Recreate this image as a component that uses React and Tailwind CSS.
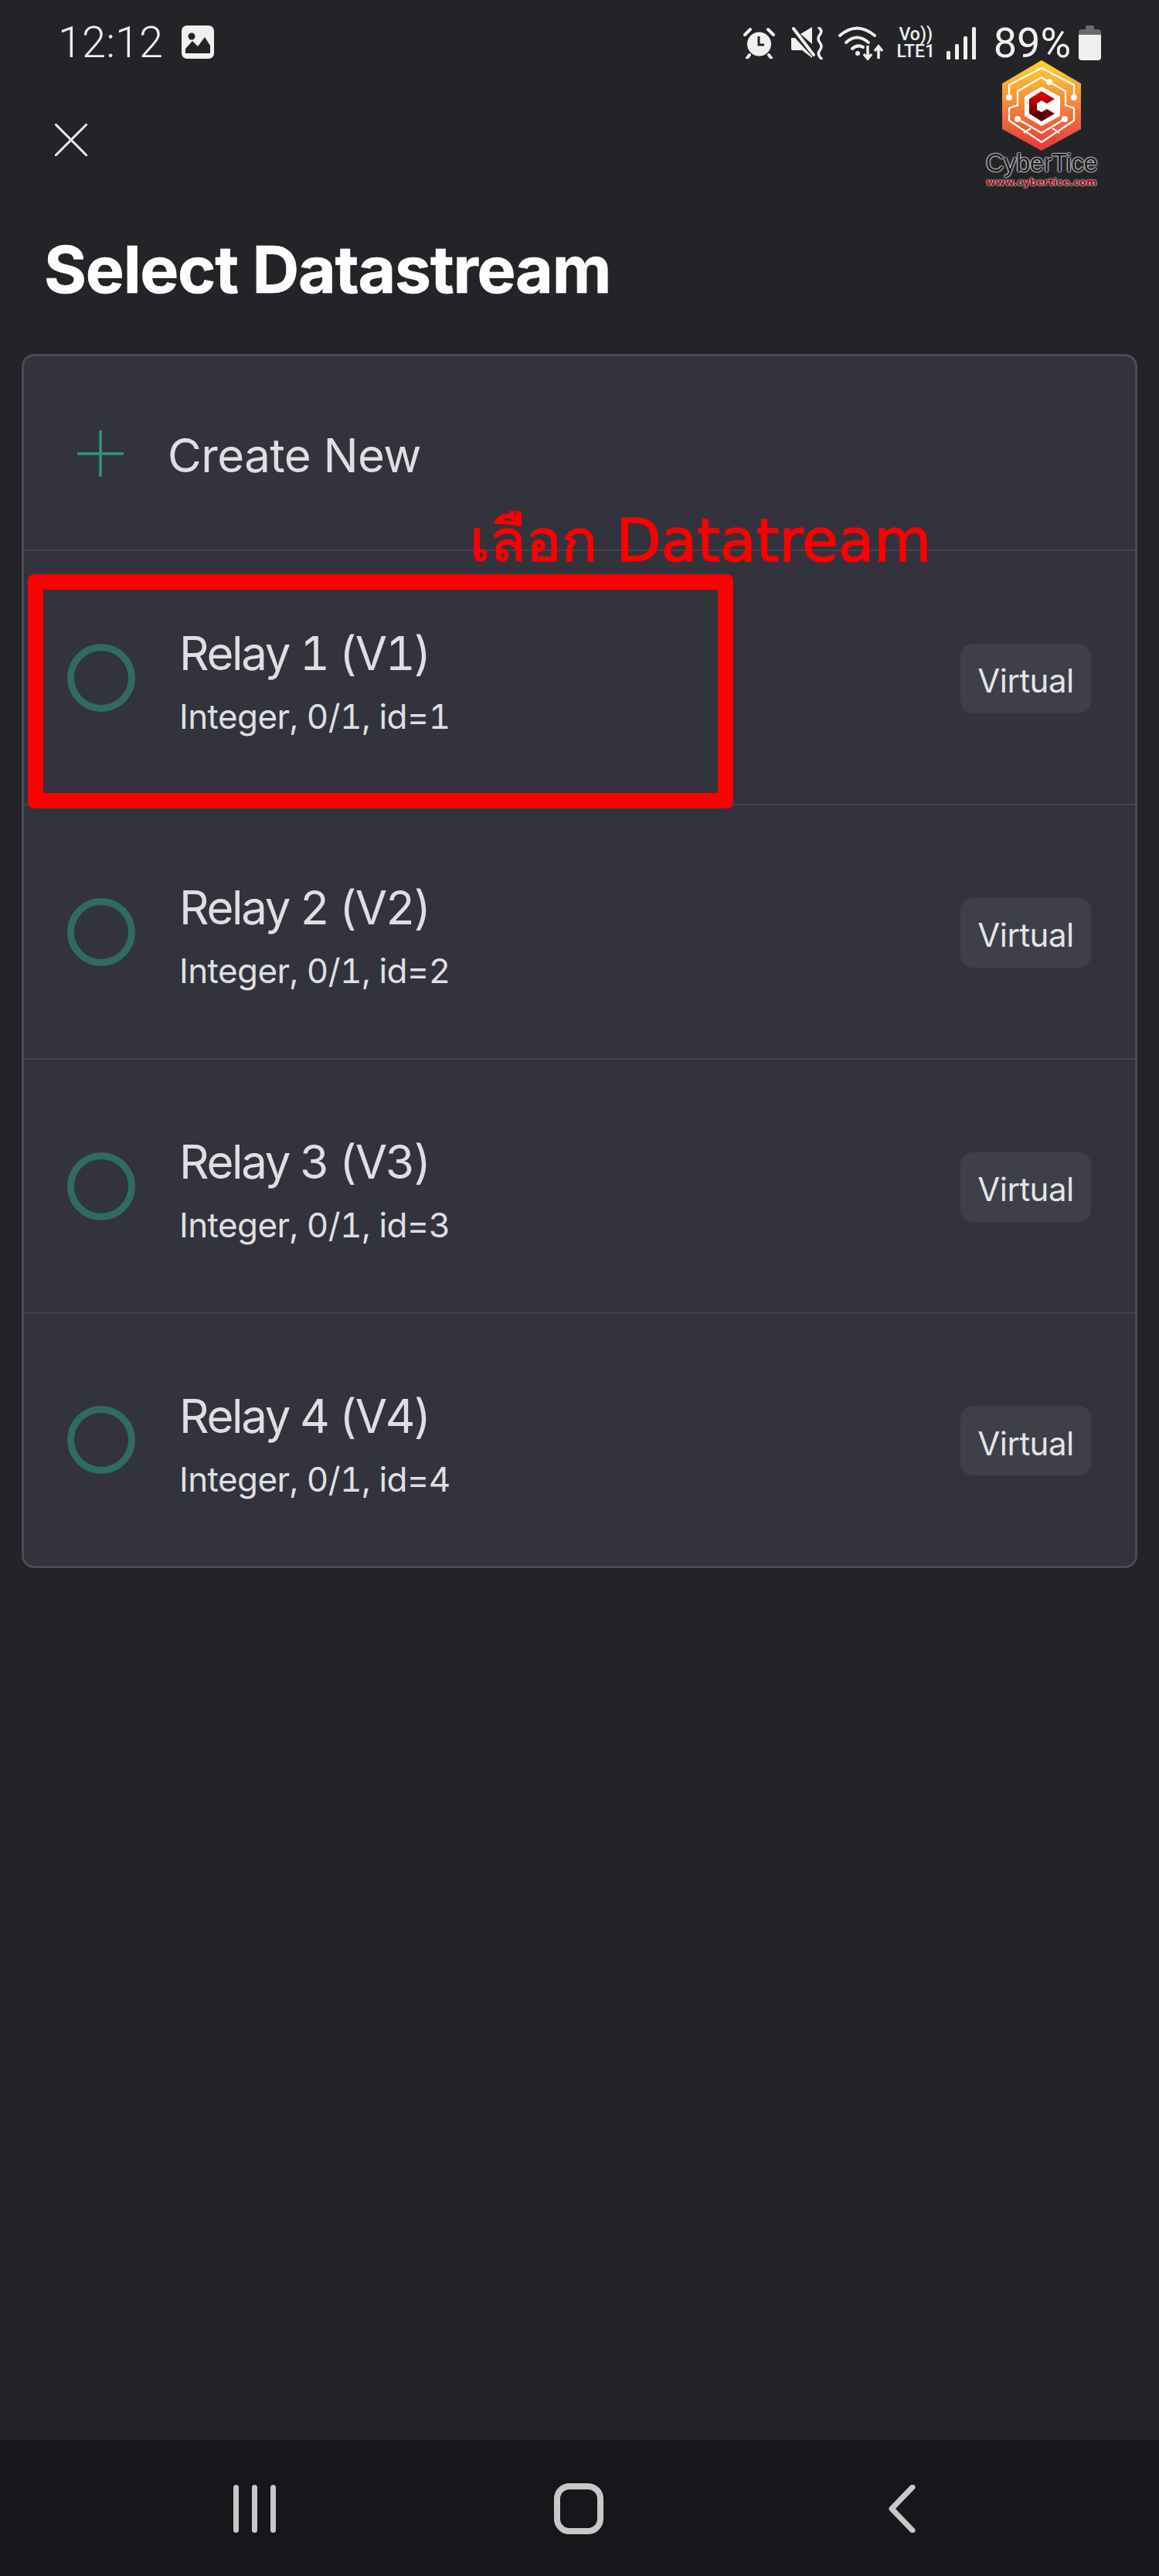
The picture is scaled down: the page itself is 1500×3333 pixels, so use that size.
const FONT = "font-['Inter','Liberation_Sans',sans-serif]";
const STREAMS = [
  { id: 1, name: "Relay 1 (V1)" },
  { id: 2, name: "Relay 2 (V2)" },
  { id: 3, name: "Relay 3 (V3)" },
  { id: 4, name: "Relay 4 (V4)" },
];

function Alarm() {
  return (
    <svg width="41" height="41" viewBox="0 0 41 41" className="shrink-0">
      <circle cx="20.5" cy="22" r="15.5" fill="#f0f0ee" />
      <path d="M2 10 L9 3 M39 10 L32 3 M8 36 L5 40 M33 36 L36 40" stroke="#f0f0ee" strokeWidth="4" strokeLinecap="round" />
      <path d="M20 12 V23 H27" stroke="#232428" strokeWidth="3" fill="none" />
    </svg>
  );
}

function Mute() {
  return (
    <svg width="43" height="42" viewBox="0 0 43 42" className="shrink-0">
      <path d="M0 14 H5 L27 38 V40 L14 30 H2 Q0 30 0 28 Z M12 9 L27 0 V22 Z" fill="#f0f0ee" />
      <path d="M3 2 L29 36" stroke="#f0f0ee" strokeWidth="4" strokeLinecap="round" />
      <path d="M36 1 Q41 5 37 10 Q33 15 37 20 Q41 25 37 30 Q33 35 39 41" stroke="#f0f0ee" strokeWidth="3.5" fill="none" strokeLinecap="round" />
    </svg>
  );
}

function Wifi() {
  return (
    <svg width="59" height="45" viewBox="0 0 59 45" className="shrink-0">
      <g stroke="#f0f0ee" strokeWidth="4" fill="none" strokeLinecap="round">
        <path d="M2 13 Q24 -6 47 13" />
        <path d="M10 22 Q24 9 39 22" />
        <path d="M18 30 Q25 24 32 28" />
      </g>
      <circle cx="25" cy="36" r="3" fill="#f0f0ee" />
      <path d="M38 26 V42 M33 37 L38 43 L43 37 M52 43 V27 M47 33 L52 27 L57 33" stroke="#f0f0ee" strokeWidth="3.5" fill="none" />
    </svg>
  );
}

function Signal() {
  return (
    <svg width="39" height="42" viewBox="0 0 39 42" className="shrink-0">
      <rect x="0" y="31" width="5" height="11" rx="1.5" fill="#f0f0ee" />
      <rect x="11" y="22" width="5" height="20" rx="1.5" fill="#f0f0ee" />
      <rect x="22" y="12" width="5" height="30" rx="1.5" fill="#f0f0ee" />
      <rect x="33" y="0" width="5" height="42" rx="1.5" fill="#f0f0ee" />
    </svg>
  );
}

function Battery() {
  return (
    <svg width="29" height="45" viewBox="0 0 29 45" className="shrink-0">
      <path d="M9 2 Q9 0 11 0 H18 Q20 0 20 2 V5 H25 Q29 5 29 9 V12 H0 V9 Q0 5 4 5 H9 Z" fill="#6a6b6f" />
      <path d="M0 12 H29 V41 Q29 45 25 45 H4 Q0 45 0 41 Z" fill="#f0f0ee" />
    </svg>
  );
}

function Logo() {
  return (
    <div className="absolute left-[1272px] top-[78px] w-[152px] flex flex-col items-center">
      <svg width="102" height="117" viewBox="0 0 102 117">
        <defs>
          <linearGradient id="hexFill" x1="0" y1="0" x2="0" y2="1">
            <stop offset="0" stopColor="#ffd633" />
            <stop offset="1" stopColor="#e8343c" />
          </linearGradient>
          <linearGradient id="cFill" x1="0" y1="0" x2="0" y2="1">
            <stop offset="0" stopColor="#f00000" />
            <stop offset="1" stopColor="#3a0000" />
          </linearGradient>
        </defs>
        <path d="M51 0 L102 30 V89 L51 117 L0 89 V30 Z" fill="url(#hexFill)" />
        <g stroke="#fff" strokeWidth="2.2" fill="none">
          <path d="M9 48 V32 L51 10 L93 32 V48" />
          <path d="M61 29 L51 22 L20 40 V58 L9 62 V78 L51 106 L93 78 V62 L82 58 V40 L61 28" />
          <path d="M20 76 L51 94 L81 76" />
          <path d="M37 88 L28 94 M65 88 L74 94" />
        </g>
        <circle cx="9" cy="48" r="4" fill="#fff" />
        <circle cx="93" cy="48" r="4" fill="#fff" />
        <circle cx="61" cy="28" r="4" fill="#fff" />
        <circle cx="20" cy="76" r="4" fill="#fff" />
        <circle cx="81" cy="76" r="4" fill="#fff" />
        <path d="M51 34 L75 47 V72 L51 85 L29 72 V47 Z" fill="#fff" />
        <path d="M51 40 L68 50 L58 56 L51 52 L45 56 V64 L51 67 L58 63 L68 69 L51 79 L35 69 V50 Z" fill="url(#cFill)" />
      </svg>
      <span className="mt-[1px] text-[33px] leading-[30px] tracking-[-0.5px] text-[#1c1c20] font-['Liberation_Sans',sans-serif] [text-shadow:0_0_2px_#fff,0_0_2px_#fff,0_0_2px_#fff]">
        CyberTice
      </span>
      <span className="mt-[3px] text-[13px] leading-[14px] font-bold text-[#a00010] font-['DejaVu_Sans',sans-serif] [text-shadow:0_0_2px_#fff,0_0_2px_#fff]">
        www.cybertice.com
      </span>
    </div>
  );
}

function StatusBar() {
  return (
    <div className="h-[110px] flex items-start justify-between pl-[75px] pr-[75px] pt-[33px] text-[#f0f0ee] font-['Roboto',sans-serif]">
      <div className="flex items-center">
        <span className="text-[56px] leading-[42px] font-light">12:12</span>
        <svg width="42" height="43" viewBox="0 0 42 43" className="ml-[24px]">
          <rect x="0" y="0" width="42" height="43" rx="7" fill="#f0f0ee" />
          <circle cx="13" cy="14" r="4.5" fill="#232428" />
          <path d="M5 36 V30 L14 20 L21 27 L30 15 L37 26 V36 Z" fill="#232428" />
        </svg>
      </div>
      <div className="flex items-center">
        <Alarm />
        <div className="ml-[21px]"><Mute /></div>
        <div className="ml-[18px]"><Wifi /></div>
        <div className="ml-[15px] w-[53px] flex flex-col items-center font-medium">
          <span className="text-[23px] leading-[22px]">Vo))</span>
          <span className="text-[23px] leading-[22px]">LTE1</span>
        </div>
        <div className="ml-[13px]"><Signal /></div>
        <span className="ml-[22px] text-[54px] leading-[42px]">89%</span>
        <div className="ml-[10px]"><Battery /></div>
      </div>
    </div>
  );
}

function StreamRow({ stream, last }) {
  return (
    <div className={`flex items-center pl-[56px] pr-[57px] border-t-2 border-[#43444e] ${last ? "h-[328px]" : "h-[329px]"}`}>
      <div className="w-[88px] h-[88px] rounded-full border-[9px] border-[#2f6b5e] shrink-0" />
      <div className="ml-[57px] mt-[13px] flex-1 tabular-nums">
        <div className="text-[60px] leading-[60px] tracking-[-2.3px] text-[#dfdfe3]">{stream.name}</div>
        <div className="mt-[28px] text-[44px] leading-[48px] tracking-[-0.6px] text-[#dfdfe3]">
          Integer, 0/1, id={stream.id}
        </div>
      </div>
      <div className="mt-[2px] w-[169px] h-[90px] pt-[6px] rounded-2xl bg-[#3e3f48] flex items-center justify-center text-[42px] tracking-[-0.5px] text-[#e4e4e7]">
        Virtual
      </div>
    </div>
  );
}

export default function App() {
  return (
    <div className={`relative w-[1500px] h-[3333px] bg-[#232428] flex flex-col overflow-hidden ${FONT}`}>
      <StatusBar />

      {/* Header */}
      <div className="mt-[50px] pl-[71px]">
        <svg width="42" height="42" viewBox="0 0 42 42" className="block">
          <path d="M1 1 L41 41 M41 1 L1 41" stroke="#f0f0f0" strokeWidth="3" strokeLinecap="round" />
        </svg>
      </div>
      <h1 className="mt-[97px] pl-[57px] text-[84px] leading-[100px] font-bold text-white tracking-[-1.2px] [-webkit-text-stroke:0.6px_#ffffff]">
        Select Datastream
      </h1>

      {/* Datastream list */}
      <div className="mt-[59px] mx-[28px] rounded-2xl border-[3px] border-[#4a4b55] bg-[#32333d]">
        <div className="h-[250px] flex items-center pl-[69px]">
          <svg width="60" height="60" viewBox="0 0 60 60" className="shrink-0 mt-[2px]">
            <path d="M30 0 V60 M0 30 H60" stroke="#2f9484" strokeWidth="3.5" />
          </svg>
          <span className="ml-[57px] mt-[6px] text-[60px] tracking-[-0.6px] text-[#dfdfe3]">Create New</span>
        </div>
        {STREAMS.map((s, i) => (
          <StreamRow key={s.id} stream={s} last={i === STREAMS.length - 1} />
        ))}
      </div>

      {/* Nav bar */}
      <div className="mt-auto h-[176px] bg-[#16171b] shrink-0 flex items-start pt-[58px] pl-[302px]">
        <div className="flex gap-[17px]">
          <div className="w-[7px] h-[62px] rounded-full bg-[#c8c8c8]" />
          <div className="w-[7px] h-[62px] rounded-full bg-[#c8c8c8]" />
          <div className="w-[7px] h-[62px] rounded-full bg-[#c8c8c8]" />
        </div>
        <div className="ml-[360px] -mt-[2px] w-[64px] h-[66px] rounded-[20px] border-[8px] border-[#c8c8c8]" />
        <svg width="36" height="62" viewBox="0 0 36 62" className="ml-[368px]">
          <path d="M32 3 L5 31 L32 59" stroke="#c8c8c8" strokeWidth="7" fill="none" strokeLinecap="round" strokeLinejoin="round" />
        </svg>
      </div>

      {/* Overlays on the screenshot */}
      <Logo />
      <div className="absolute left-[36px] top-[743px] w-[913px] h-[303px] border-[20px] border-[#ff0000] rounded-[8px]" />
      <div className="absolute left-[608px] top-[650px] text-[76px] leading-[100px] text-[#ff0000] whitespace-nowrap font-['DejaVu_Sans','Noto_Sans',sans-serif] [-webkit-text-stroke:1.5px_#ff0000]">
        เลือก Datatream
      </div>
    </div>
  );
}
